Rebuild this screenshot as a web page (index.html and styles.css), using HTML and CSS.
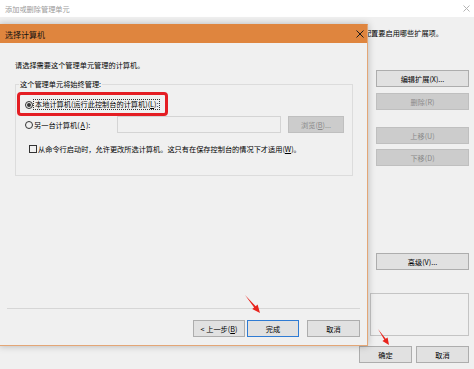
FILE: index.html
```html
<!DOCTYPE html>
<html lang="zh-CN">
<head>
    <meta charset="UTF-8">
    <meta name="viewport" content="width=device-width, initial-scale=1.0">
    <title>添加或删除管理单元</title>
    <link rel="stylesheet" href="styles.css">
</head>
<body>
    <div class="app">
        <div class="app-title">
            <span>添加或删除管理单元</span>
            <svg class="close close-gray" width="7" height="7" viewBox="0 0 7 7"><path d="M0.5 0.5L6.5 6.5M6.5 0.5L0.5 6.5"/></svg>
        </div>
        <div class="app-body">
            <div class="hint">对于可扩展的管理单元，您可以配置要启用哪些扩展项。</div>
            <div class="side">
                <div class="btn">编辑扩展(X)...</div>
                <div class="btn disabled btn-del">删除(R)</div>
                <div class="btn disabled btn-up">上移(U)</div>
                <div class="btn disabled btn-down">下移(D)</div>
                <div class="btn btn-adv">高级(V)...</div>
            </div>
            <div class="desc-box"></div>
            <div class="app-footer">
                <div class="btn">确定</div>
                <div class="btn">取消</div>
            </div>
        </div>

        <!-- the wizard page sits on top of the snap-in window -->
        <div class="dialog">
            <div class="dlg-title">
                <span>选择计算机</span>
                <svg class="close" width="8" height="8" viewBox="0 0 8 8"><path d="M0.5 0.5L7.5 7.5M7.5 0.5L0.5 7.5"/></svg>
            </div>
            <div class="dlg-body">
                <p class="intro">请选择需要这个管理单元管理的计算机。</p>
                <fieldset class="group">
                    <legend>这个管理单元将始终管理:</legend>
                    <div class="opt opt-local">
                        <span class="radio on"></span>
                        <span class="focus">本地计算机(运行此控制台的计算机)(<u>L</u>):</span>
                    </div>
                    <div class="opt opt-remote">
                        <span class="opt-label"><span class="radio"></span>另一台计算机(<u>A</u>):</span>
                        <span class="textbox"></span>
                        <span class="btn disabled browse">浏览(<u>B</u>)...</span>
                    </div>
                    <div class="opt opt-check">
                        <span class="check"></span>
                        <span>从命令行启动时，允许更改所选计算机。这只有在保存控制台的情况下才适用(<u>W</u>)。</span>
                    </div>
                </fieldset>
            </div>
            <div class="dlg-footer">
                <div class="btn btn-back">&lt; 上一步(<u>B</u>)</div>
                <div class="btn default">完成</div>
                <div class="btn btn-cancel">取消</div>
            </div>
        </div>

        <!-- annotations -->
        <div class="highlight"></div>
        <svg class="marks" width="474" height="369" viewBox="0 0 474 369">
            <polygon points="245,295 255.7,306.2 257.6,304.6 260,313 252.2,309 254.1,307.4"/>
            <polygon points="378,329 385.7,338.7 387.6,337.4 389,345 382.4,341 384.3,339.7"/>
        </svg>
    </div>
</body>
</html>
```

FILE: styles.css
```css
* {
    box-sizing: border-box;
}
body {
    margin: 0;
    font-family: "Noto Sans CJK SC", "Microsoft YaHei", sans-serif;
    font-size: 7.2px;
    color: #000;
}
.app {
    position: relative;
    width: 474px;
    height: 369px;
    overflow: hidden;
    background: #f0f0f0;
}
.app-title {
    height: 17px;
    background: #fff;
    display: flex;
    align-items: center;
    justify-content: space-between;
    padding: 0 4px 0 5px;
    color: #9a9a9a;
}
.close {
    fill: none;
    stroke: #1a1a1a;
    stroke-width: 1;
}
.close-gray {
    stroke: #b4b4b4;
}
.app-body {
    display: flex;
    flex-direction: column;
    align-items: flex-end;
    padding: 11px 5px 0 0;
}
.hint {
    line-height: 10px;
    white-space: nowrap;
    margin-right: 26px;
}
.btn {
    display: flex;
    align-items: center;
    justify-content: center;
    height: 17px;
    border: 1px solid #adadad;
    background: #e1e1e1;
    white-space: nowrap;
}
.btn.disabled {
    background: #cccccc;
    border-color: #bfbfbf;
    color: #8a8a8a;
}
.btn.default {
    border-color: #2f7bd3;
}
.side {
    width: 93px;
    margin-top: 32px;
    display: flex;
    flex-direction: column;
}
.btn-del {
    margin-top: 6px;
}
.btn-up {
    margin-top: 17px;
}
.btn-down {
    margin-top: 5px;
}
.btn-adv {
    margin-top: 87px;
}
.desc-box {
    width: 99px;
    height: 43px;
    margin-top: 23px;
    border: 1px solid #c4c4c4;
}
.app-footer {
    display: flex;
    gap: 4px;
    margin-top: 10px;
}
.app-footer .btn {
    width: 53px;
}

.dialog {
    position: absolute;
    left: -1px;
    top: 24px;
    width: 369px;
    height: 322px;
    border: 1px solid #e3a676;
    border-top-color: #df853e;
    background: #f0f0f0;
    box-shadow: 0 0 7px rgba(0, 0, 0, 0.25);
    display: flex;
    flex-direction: column;
}
.dlg-title {
    height: 18px;
    background: #df853e;
    display: flex;
    align-items: center;
    justify-content: space-between;
    padding: 0 3px 0 5px;
    font-size: 8px;
    color: #111;
}
.dlg-body {
    padding: 17px 14px 0 15px;
}
.intro {
    margin: 0;
    line-height: 10px;
}
.group {
    margin: 9px 0 0;
    border: 1px solid #dcdcdc;
    padding: 10px 0 21px 9px;
    min-width: 0;
}
.group legend {
    padding: 0 1px;
    margin-left: -6px;
    line-height: 10px;
}
.opt {
    display: flex;
    align-items: center;
}
.radio {
    width: 8px;
    height: 8px;
    border: 1px solid #333;
    border-radius: 50%;
    display: inline-flex;
    align-items: center;
    justify-content: center;
    flex: none;
}
.radio.on::after {
    content: "";
    width: 4px;
    height: 4px;
    border-radius: 50%;
    background: #333;
}
.focus {
    line-height: 9px;
    border: 1px dotted #333;
    padding: 0 1px;
}
.opt-remote {
    margin-top: 6px;
    height: 17px;
}
.opt-label {
    width: 92px;
    display: flex;
    align-items: center;
    gap: 1px;
}
.textbox {
    width: 164px;
    height: 17px;
    border: 1px solid #d4d4d4;
}
.browse {
    width: 56px;
    margin-left: 7px;
}
.opt-check {
    margin-top: 11px;
    line-height: 10px;
}
.check {
    width: 8px;
    height: 8px;
    border: 1px solid #333;
    margin: 0 1px 0 4px;
    flex: none;
}
.dlg-footer {
    margin: auto 7px 0 7px;
    border-top: 1px solid #d6d6d6;
    padding: 11px 0 8px;
    display: flex;
    justify-content: flex-end;
}
.dlg-footer .btn {
    width: 52px;
}
.dlg-footer .default {
    margin-left: 2px;
}
.dlg-footer .btn-cancel {
    width: 53px;
    margin-left: 8px;
}

.highlight {
    position: absolute;
    left: 17px;
    top: 92px;
    width: 151px;
    height: 24px;
    border: 3px solid #e41d23;
    border-radius: 4px;
}
.marks {
    position: absolute;
    left: 0;
    top: 0;
    fill: #e8231c;
}
```
